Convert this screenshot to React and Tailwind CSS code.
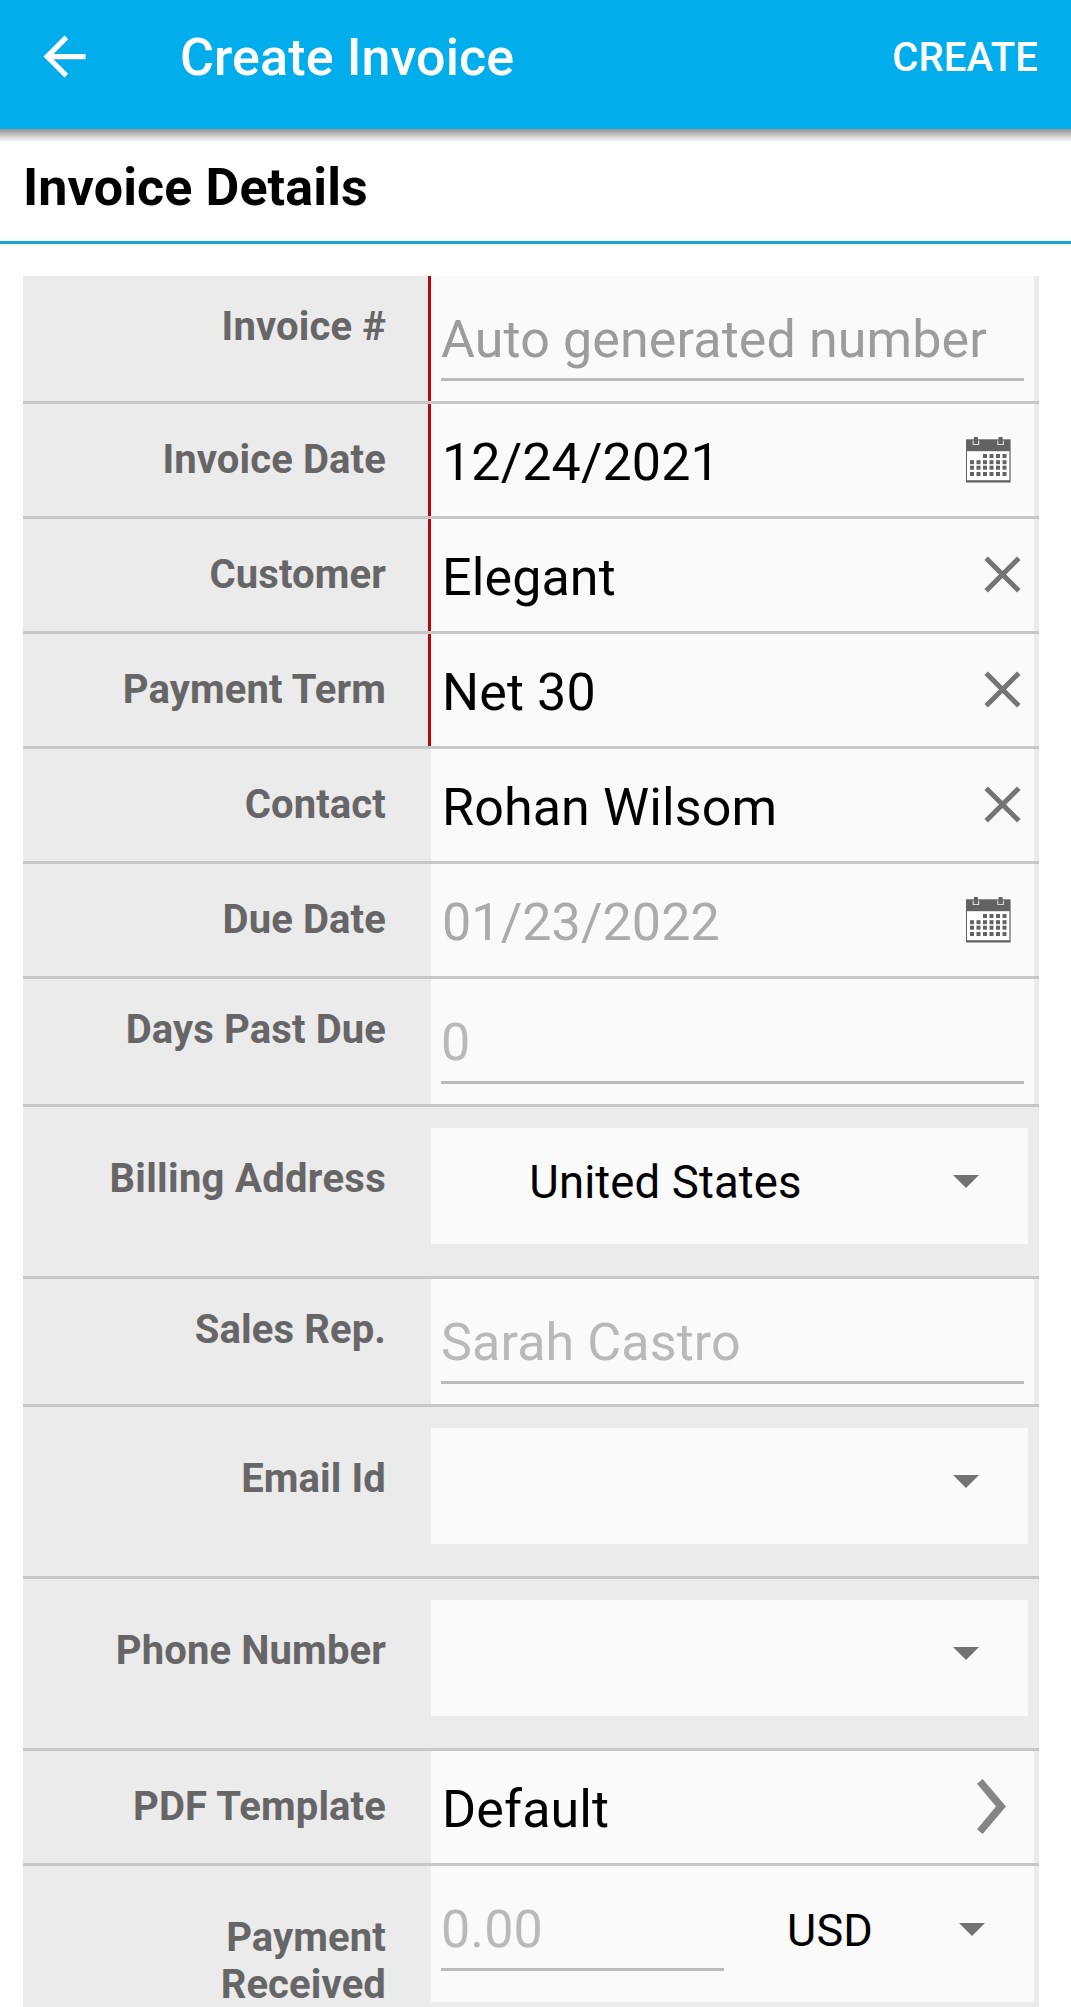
import { useState } from 'react'

// 폼 행 목록
const fields = [
  { label: 'Invoice #', type: 'input', placeholder: 'Auto generated number', required: true },
  { label: 'Invoice Date', type: 'date', value: '12/24/2021', required: true },
  { label: 'Customer', type: 'lookup', value: 'Elegant', required: true },
  { label: 'Payment Term', type: 'lookup', value: 'Net 30', required: true },
  { label: 'Contact', type: 'lookup', value: 'Rohan Wilsom' },
  { label: 'Due Date', type: 'date', value: '01/23/2022', disabled: true },
  { label: 'Days Past Due', type: 'input', value: '0', disabled: true },
  { label: 'Billing Address', type: 'select', value: 'United States', labelClass: 'tracking-[0.3px]' },
  { label: 'Sales Rep.', type: 'input', value: 'Sarah Castro', disabled: true },
  { label: 'Email Id', type: 'select', value: '' },
  { label: 'Phone Number', type: 'select', value: '' },
  { label: 'PDF Template', type: 'link', value: 'Default' },
  { label: 'Payment Received', type: 'amount', value: '0.00', currency: 'USD' },
]

const rowHeight = {
  input: 'h-32',
  date: 'h-[115px]',
  lookup: 'h-[115px]',
  link: 'h-[115px]',
  select: 'h-[172px]',
  amount: 'h-[141px]',
}

const labelTop = {
  input: 'pt-[27px]',
  date: 'pt-8',
  lookup: 'pt-8',
  link: 'pt-8',
  select: 'pt-12',
  amount: 'pt-12',
}

function BackIcon() {
  return (
    <svg className="w-[63px] h-[63px]" viewBox="0 0 24 24" fill="currentColor">
      <path d="M20 11H7.83l5.59-5.59L12 4l-8 8 8 8 1.41-1.41L7.83 13H20v-2z" />
    </svg>
  )
}

function CalendarIcon() {
  const dots = []
  const rows = [17, 23.2, 28.7, 35]
  rows.forEach((y, r) => {
    for (let c = r === 0 ? 2 : 0; c < 6; c++) {
      dots.push(<rect key={`${r}-${c}`} x={4 + c * 6.5} y={y} width="4" height="4" />)
    }
  })
  return (
    <svg className="w-[45px] h-[46px]" viewBox="0 0 45 46" fill="#626262">
      <rect x="0" y="2.3" width="44.6" height="43.2" />
      <rect x="1" y="14.2" width="42.4" height="29" fill="#ffffff" />
      <path d="M7.2 3.4v4.1h5.4V3.4M31.9 3.4v4.1h5.4V3.4" fill="none" stroke="#dedede" strokeWidth="1.2" />
      <rect x="7.9" y="0" width="4" height="6.5" />
      <rect x="32.6" y="0" width="4" height="6.5" />
      {dots}
    </svg>
  )
}

function ClearIcon() {
  return (
    <svg className="w-[37px] h-[37px]" viewBox="0 0 37 37" fill="none" stroke="#747474" strokeWidth="5">
      <path d="M2.2 2.2L34.8 34.8M34.8 2.2L2.2 34.8" />
    </svg>
  )
}

function ChevronIcon() {
  return (
    <svg className="w-[29px] h-[55px]" viewBox="0 0 29 55" fill="#858585">
      <path d="M0 4.8L5.6 0L29 27.5L5.6 55L0 50.2L19 27.5Z" />
    </svg>
  )
}

function DropdownIcon() {
  return (
    <svg className="w-[26px] h-[13px]" viewBox="0 0 26 13" fill="#737373">
      <path d="M0 0H26L13 13Z" />
    </svg>
  )
}

function FieldValue({ field, onClear }) {
  if (field.type === 'input') {
    return (
      <div className="flex-1 mr-[5px] bg-[#fafafa] pl-2.5 pr-2.5">
        <div className={`h-[105px] pt-[33px] border-b-[3px] border-[#bababa] text-[52px] leading-[61px] whitespace-nowrap ${field.disabled ? 'text-[#b9b9b9]' : 'text-[#9c9c9c]'}`}>
          {field.value || field.placeholder}
        </div>
      </div>
    )
  }

  if (field.type === 'select') {
    return (
      <div className="flex-1 mr-[11px] mt-[21px] h-[116px] bg-[#fafafa] flex">
        <span className="w-[469px] pt-7 text-center text-[45.5px] leading-[53px]">{field.value}</span>
        <span className="mt-[47px] ml-[53px]"><DropdownIcon /></span>
      </div>
    )
  }

  if (field.type === 'amount') {
    return (
      <div className="flex-1 mr-[5px] h-[136px] bg-[#fafafa] flex pl-2.5">
        <div className="w-[283px] h-[105px] pt-[33px] border-b-[3px] border-[#bababa] text-[52px] leading-[61px] text-[#b9b9b9]">
          {field.value}
        </div>
        <span className="w-[212px] pt-[38px] text-center text-[45px] leading-[53px]">{field.currency}</span>
        <span className="mt-[57px] ml-[23px]"><DropdownIcon /></span>
      </div>
    )
  }

  return (
    <div className="flex-1 mr-[5px] bg-[#fafafa] flex justify-between pl-[11px]">
      <span className={`pt-7 text-[52px] leading-[61px] ${field.disabled ? 'text-[#ababab]' : 'text-black'}`}>{field.value}</span>
      {field.type === 'date' && <span className="mt-[33px] mr-[23px]"><CalendarIcon /></span>}
      {field.type === 'lookup' && (
        <button type="button" onClick={onClear} className="self-start mt-[37px] mr-[13px]"><ClearIcon /></button>
      )}
      {field.type === 'link' && <span className="mt-7 mr-[28px]"><ChevronIcon /></span>}
    </div>
  )
}

function App() {
  const [rows, setRows] = useState(fields)

  // 선택값 지우기
  const handleClear = (label) => {
    setRows(rows.map((row) => (row.label === label ? { ...row, value: '' } : row)))
  }

  return (
    <div className="w-[1071px] h-[2007px] overflow-hidden bg-white text-black font-[Roboto,sans-serif] tracking-[0.12px]">
      <header className="h-[129px] bg-[#02adec] text-white flex items-start">
        <button type="button" className="mt-[25px] ml-[33px]"><BackIcon /></button>
        <h1 className="mt-[27px] ml-[84px] text-[52px] leading-[61px] font-medium">Create Invoice</h1>
        <button type="button" className="mt-[34px] ml-auto mr-[33px] text-[40px] leading-[47px] font-medium">CREATE</button>
      </header>
      <div className="h-[13px] bg-linear-to-b from-[#959595] to-white"></div>

      <h2 className="h-[102px] pt-[15px] pl-[23px] border-b-[3px] border-[#1ba4d8] text-[52px] leading-[61px] font-bold">Invoice Details</h2>

      <div className="mt-8 ml-[23px] w-[1016px] bg-[#ebebeb]">
        {rows.map((field) => (
          <div key={field.label} className={`flex items-stretch border-[#c7c7c7] ${rowHeight[field.type]} ${field.type === 'amount' ? '' : 'border-b-[3px]'}`}>
            <div className={`w-[408px] shrink-0 flex justify-end text-right text-[40px] leading-[47px] font-bold text-[#666666] ${labelTop[field.type]} ${field.required ? 'border-r-[3px] border-r-[#b90606] pr-[19px]' : 'pr-[22px]'}`}>
              <span className={`w-[300px] mr-[23px] ${field.labelClass || ''}`}>{field.label}</span>
            </div>
            <FieldValue field={field} onClear={() => handleClear(field.label)} />
          </div>
        ))}
      </div>
    </div>
  )
}

export default App
